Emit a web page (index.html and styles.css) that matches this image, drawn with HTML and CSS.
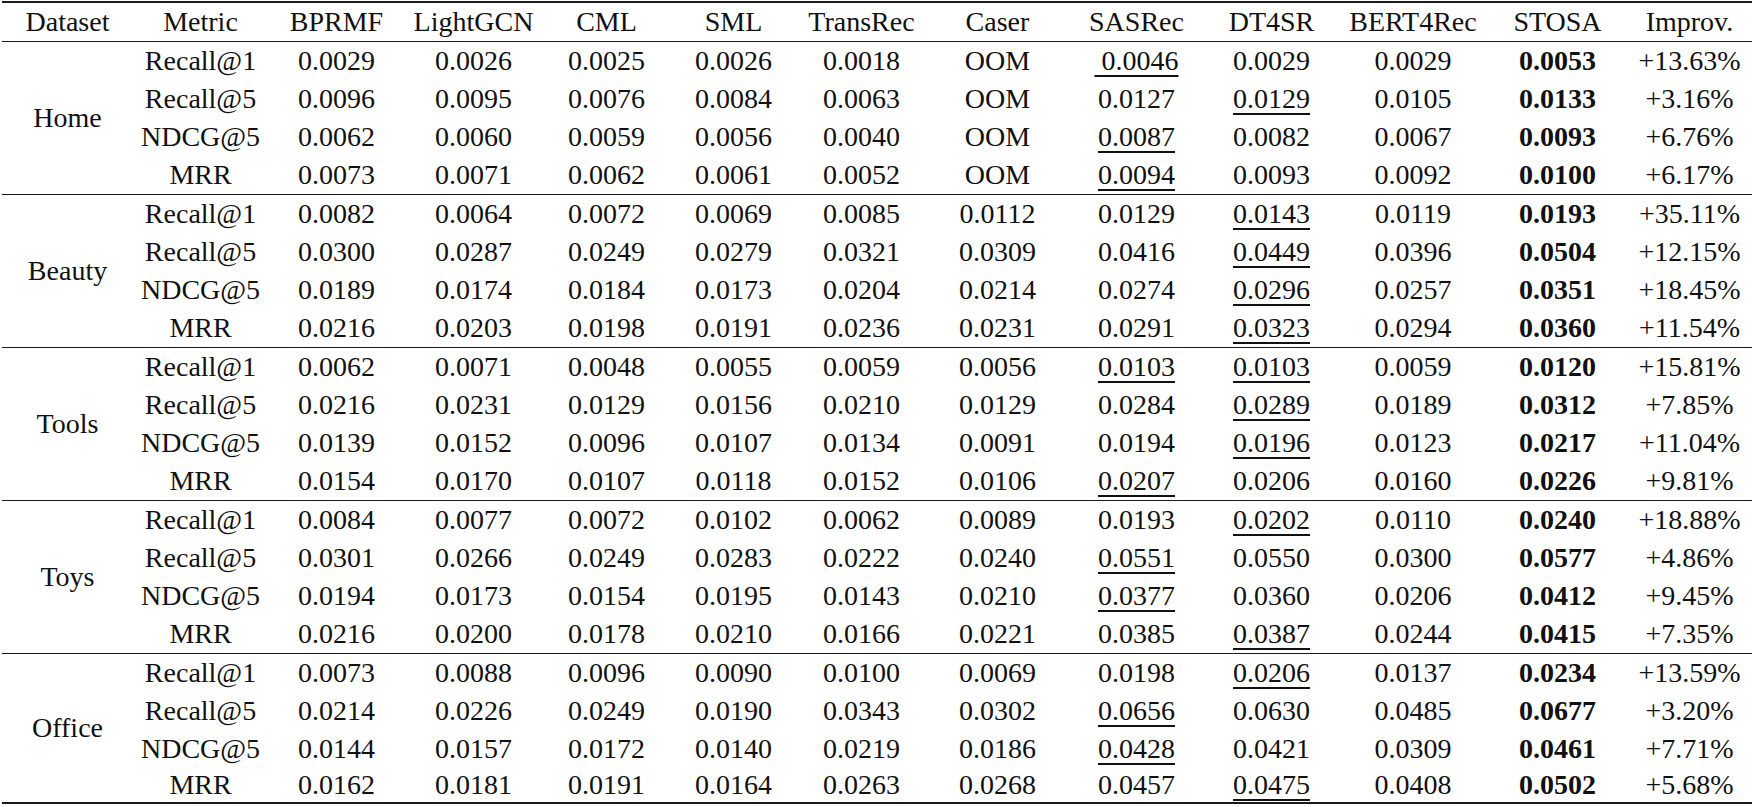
FILE: index.html
```html
<!DOCTYPE html>
<html lang="en">
<head>
    <meta charset="UTF-8">
    <meta name="viewport" content="width=device-width, initial-scale=1.0">
    <title>Results</title>
    <link rel="stylesheet" href="styles.css">
</head>
<body>
    <table class="results">
        <colgroup>
            <col class="c-dataset">
            <col class="c-metric">
            <col class="c-bprmf">
            <col class="c-lightgcn">
            <col class="c-cml">
            <col class="c-sml">
            <col class="c-transrec">
            <col class="c-caser">
            <col class="c-sasrec">
            <col class="c-dt4sr">
            <col class="c-bert">
            <col class="c-stosa">
            <col class="c-improv">
        </colgroup>
        <thead>
            <tr>
                <th>Dataset</th><th>Metric</th><th>BPRMF</th><th>LightGCN</th><th>CML</th><th>SML</th><th>TransRec</th><th>Caser</th><th>SASRec</th><th>DT4SR</th><th>BERT4Rec</th><th>STOSA</th><th>Improv.</th>
            </tr>
        </thead>
        <tbody>
            <tr>
                <td rowspan="4" class="dataset">Home</td>
                <td>Recall@1</td><td>0.0029</td><td>0.0026</td><td>0.0025</td><td>0.0026</td><td>0.0018</td><td>OOM</td><td><span class="u">&nbsp;0.0046</span></td><td>0.0029</td><td>0.0029</td><td class="best">0.0053</td><td>+13.63%</td>
            </tr>
            <tr>
                <td>Recall@5</td><td>0.0096</td><td>0.0095</td><td>0.0076</td><td>0.0084</td><td>0.0063</td><td>OOM</td><td>0.0127</td><td><span class="u">0.0129</span></td><td>0.0105</td><td class="best">0.0133</td><td>+3.16%</td>
            </tr>
            <tr>
                <td>NDCG@5</td><td>0.0062</td><td>0.0060</td><td>0.0059</td><td>0.0056</td><td>0.0040</td><td>OOM</td><td><span class="u">0.0087</span></td><td>0.0082</td><td>0.0067</td><td class="best">0.0093</td><td>+6.76%</td>
            </tr>
            <tr>
                <td>MRR</td><td>0.0073</td><td>0.0071</td><td>0.0062</td><td>0.0061</td><td>0.0052</td><td>OOM</td><td><span class="u">0.0094</span></td><td>0.0093</td><td>0.0092</td><td class="best">0.0100</td><td>+6.17%</td>
            </tr>
        </tbody>
        <tbody>
            <tr>
                <td rowspan="4" class="dataset">Beauty</td>
                <td>Recall@1</td><td>0.0082</td><td>0.0064</td><td>0.0072</td><td>0.0069</td><td>0.0085</td><td>0.0112</td><td>0.0129</td><td><span class="u">0.0143</span></td><td>0.0119</td><td class="best">0.0193</td><td>+35.11%</td>
            </tr>
            <tr>
                <td>Recall@5</td><td>0.0300</td><td>0.0287</td><td>0.0249</td><td>0.0279</td><td>0.0321</td><td>0.0309</td><td>0.0416</td><td><span class="u">0.0449</span></td><td>0.0396</td><td class="best">0.0504</td><td>+12.15%</td>
            </tr>
            <tr>
                <td>NDCG@5</td><td>0.0189</td><td>0.0174</td><td>0.0184</td><td>0.0173</td><td>0.0204</td><td>0.0214</td><td>0.0274</td><td><span class="u">0.0296</span></td><td>0.0257</td><td class="best">0.0351</td><td>+18.45%</td>
            </tr>
            <tr>
                <td>MRR</td><td>0.0216</td><td>0.0203</td><td>0.0198</td><td>0.0191</td><td>0.0236</td><td>0.0231</td><td>0.0291</td><td><span class="u">0.0323</span></td><td>0.0294</td><td class="best">0.0360</td><td>+11.54%</td>
            </tr>
        </tbody>
        <tbody>
            <tr>
                <td rowspan="4" class="dataset">Tools</td>
                <td>Recall@1</td><td>0.0062</td><td>0.0071</td><td>0.0048</td><td>0.0055</td><td>0.0059</td><td>0.0056</td><td><span class="u">0.0103</span></td><td><span class="u">0.0103</span></td><td>0.0059</td><td class="best">0.0120</td><td>+15.81%</td>
            </tr>
            <tr>
                <td>Recall@5</td><td>0.0216</td><td>0.0231</td><td>0.0129</td><td>0.0156</td><td>0.0210</td><td>0.0129</td><td>0.0284</td><td><span class="u">0.0289</span></td><td>0.0189</td><td class="best">0.0312</td><td>+7.85%</td>
            </tr>
            <tr>
                <td>NDCG@5</td><td>0.0139</td><td>0.0152</td><td>0.0096</td><td>0.0107</td><td>0.0134</td><td>0.0091</td><td>0.0194</td><td><span class="u">0.0196</span></td><td>0.0123</td><td class="best">0.0217</td><td>+11.04%</td>
            </tr>
            <tr>
                <td>MRR</td><td>0.0154</td><td>0.0170</td><td>0.0107</td><td>0.0118</td><td>0.0152</td><td>0.0106</td><td><span class="u">0.0207</span></td><td>0.0206</td><td>0.0160</td><td class="best">0.0226</td><td>+9.81%</td>
            </tr>
        </tbody>
        <tbody>
            <tr>
                <td rowspan="4" class="dataset">Toys</td>
                <td>Recall@1</td><td>0.0084</td><td>0.0077</td><td>0.0072</td><td>0.0102</td><td>0.0062</td><td>0.0089</td><td>0.0193</td><td><span class="u">0.0202</span></td><td>0.0110</td><td class="best">0.0240</td><td>+18.88%</td>
            </tr>
            <tr>
                <td>Recall@5</td><td>0.0301</td><td>0.0266</td><td>0.0249</td><td>0.0283</td><td>0.0222</td><td>0.0240</td><td><span class="u">0.0551</span></td><td>0.0550</td><td>0.0300</td><td class="best">0.0577</td><td>+4.86%</td>
            </tr>
            <tr>
                <td>NDCG@5</td><td>0.0194</td><td>0.0173</td><td>0.0154</td><td>0.0195</td><td>0.0143</td><td>0.0210</td><td><span class="u">0.0377</span></td><td>0.0360</td><td>0.0206</td><td class="best">0.0412</td><td>+9.45%</td>
            </tr>
            <tr>
                <td>MRR</td><td>0.0216</td><td>0.0200</td><td>0.0178</td><td>0.0210</td><td>0.0166</td><td>0.0221</td><td>0.0385</td><td><span class="u">0.0387</span></td><td>0.0244</td><td class="best">0.0415</td><td>+7.35%</td>
            </tr>
        </tbody>
        <tbody>
            <tr>
                <td rowspan="4" class="dataset">Office</td>
                <td>Recall@1</td><td>0.0073</td><td>0.0088</td><td>0.0096</td><td>0.0090</td><td>0.0100</td><td>0.0069</td><td>0.0198</td><td><span class="u">0.0206</span></td><td>0.0137</td><td class="best">0.0234</td><td>+13.59%</td>
            </tr>
            <tr>
                <td>Recall@5</td><td>0.0214</td><td>0.0226</td><td>0.0249</td><td>0.0190</td><td>0.0343</td><td>0.0302</td><td><span class="u">0.0656</span></td><td>0.0630</td><td>0.0485</td><td class="best">0.0677</td><td>+3.20%</td>
            </tr>
            <tr>
                <td>NDCG@5</td><td>0.0144</td><td>0.0157</td><td>0.0172</td><td>0.0140</td><td>0.0219</td><td>0.0186</td><td><span class="u">0.0428</span></td><td>0.0421</td><td>0.0309</td><td class="best">0.0461</td><td>+7.71%</td>
            </tr>
            <tr class="last">
                <td>MRR</td><td>0.0162</td><td>0.0181</td><td>0.0191</td><td>0.0164</td><td>0.0263</td><td>0.0268</td><td>0.0457</td><td><span class="u">0.0475</span></td><td>0.0408</td><td class="best">0.0502</td><td>+5.68%</td>
            </tr>
        </tbody>
    </table>
</body>
</html>
```

FILE: styles.css
```css
body {
    margin: 0;
    padding: 1px 6px 0 2px;
    background-color: white;
    color: #111;
    font-family: "Liberation Serif", "Times New Roman", serif;
}
.results {
    width: 1750px;
    table-layout: fixed;
    border-collapse: collapse;
    font-size: 28px;
}
.c-dataset { width: 131px; }
.c-metric { width: 135px; }
.c-bprmf { width: 137px; }
.c-lightgcn { width: 137px; }
.c-cml { width: 129px; }
.c-sml { width: 125px; }
.c-transrec { width: 131px; }
.c-caser { width: 141px; }
.c-sasrec { width: 137px; }
.c-dt4sr { width: 133px; }
.c-bert { width: 150px; }
.c-stosa { width: 139px; }
.c-improv { width: 125px; }
.results th,
.results td {
    height: 38px;
    padding: 0;
    text-align: center;
    vertical-align: middle;
    font-weight: normal;
    line-height: 38px;
    white-space: nowrap;
}
.results tr.last td {
    height: 34px;
    line-height: 34px;
}
.results thead tr {
    border-top: 2px solid #1a1a1a;
    border-bottom: 1px solid #1a1a1a;
}
.results tbody {
    border-bottom: 1px solid #1a1a1a;
}
.results tbody:last-child {
    border-bottom: 2px solid #1a1a1a;
}
.results .best {
    font-weight: bold;
}
.u {
    text-decoration: underline;
    text-decoration-thickness: 1.5px;
    text-underline-offset: 5px;
}
```
